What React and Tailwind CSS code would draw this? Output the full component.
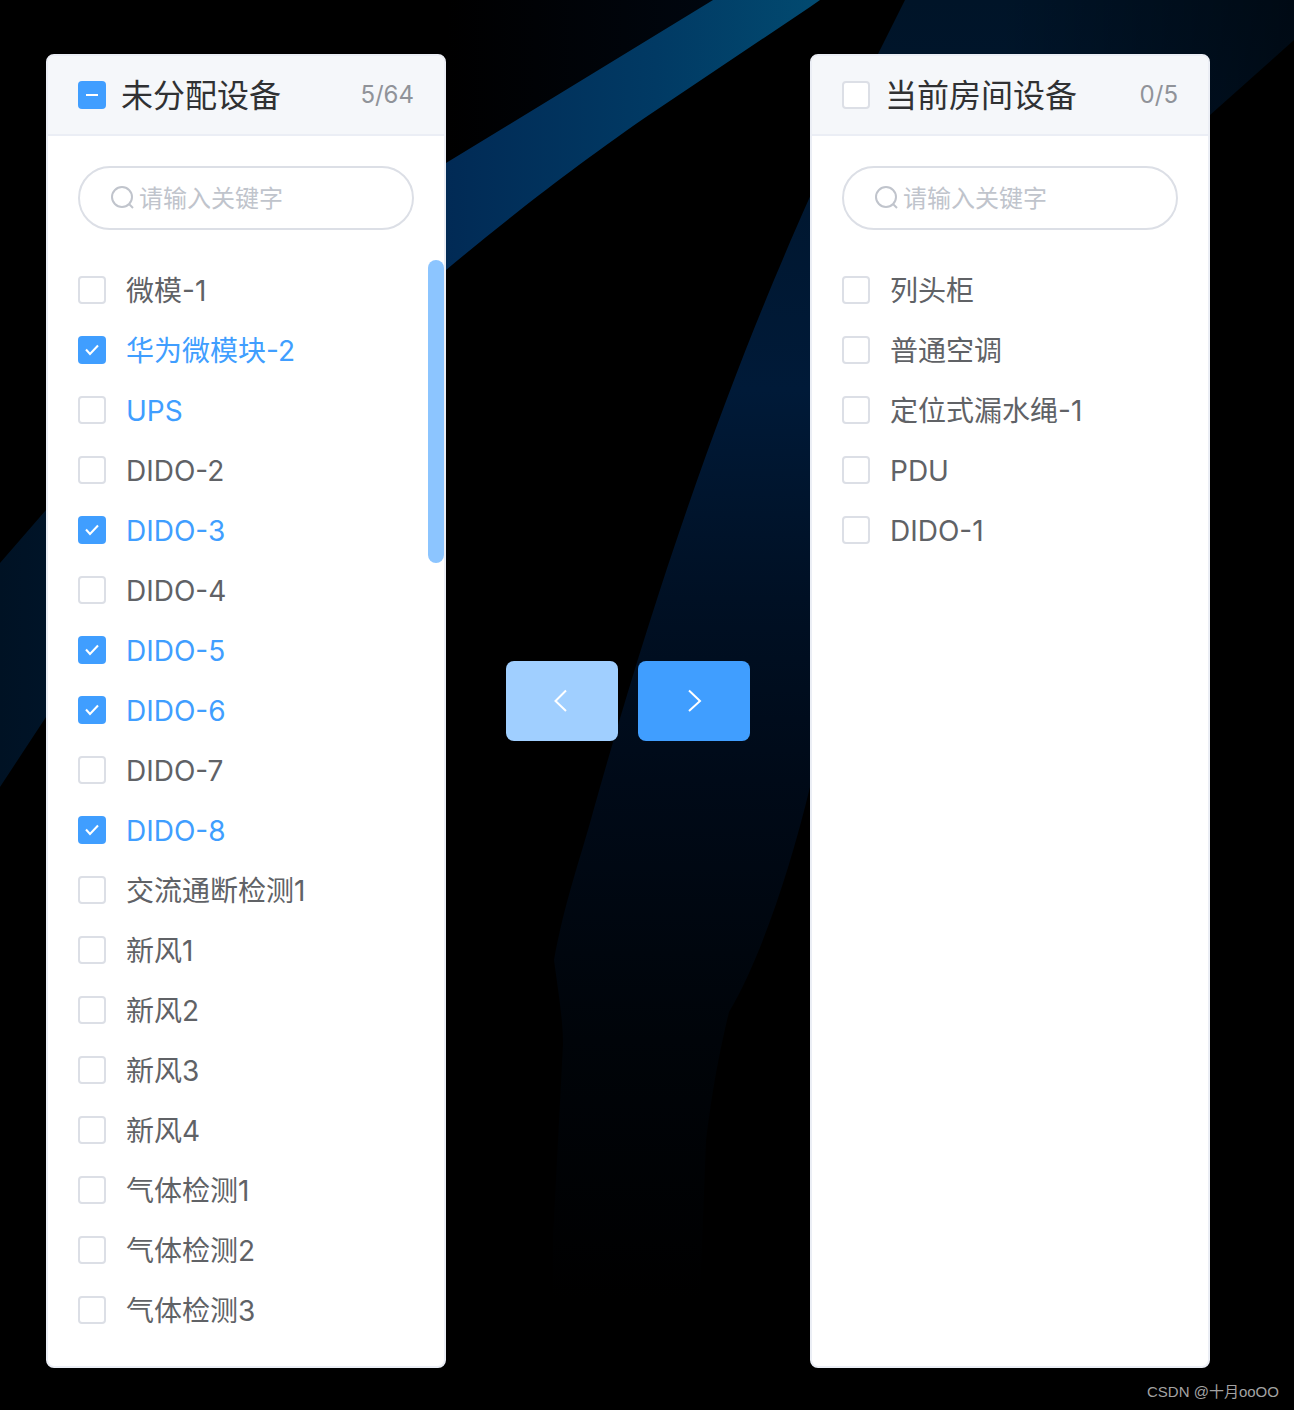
import React from 'react';

const leftItems = [
  { label: '微模-1' },
  { label: '华为微模块-2', checked: true },
  { label: 'UPS', active: true },
  { label: 'DIDO-2' },
  { label: 'DIDO-3', checked: true },
  { label: 'DIDO-4' },
  { label: 'DIDO-5', checked: true },
  { label: 'DIDO-6', checked: true },
  { label: 'DIDO-7' },
  { label: 'DIDO-8', checked: true },
  { label: '交流通断检测1' },
  { label: '新风1' },
  { label: '新风2' },
  { label: '新风3' },
  { label: '新风4' },
  { label: '气体检测1' },
  { label: '气体检测2' },
  { label: '气体检测3' },
];

const rightItems = [
  { label: '列头柜' },
  { label: '普通空调' },
  { label: '定位式漏水绳-1' },
  { label: 'PDU' },
  { label: 'DIDO-1' },
];

const Background = () => (
  <svg className="absolute inset-0 w-full h-full" viewBox="0 0 1294 1410" fill="none">
    <defs>
      <linearGradient id="band1" gradientUnits="userSpaceOnUse" x1="0" y1="0" x2="820" y2="0">
        <stop offset="0" stopColor="#001224" />
        <stop offset="0.06" stopColor="#001428" />
        <stop offset="0.54" stopColor="#012a55" />
        <stop offset="0.8" stopColor="#013a64" />
        <stop offset="1" stopColor="#024a70" />
      </linearGradient>
      <linearGradient id="band2" gradientUnits="userSpaceOnUse" x1="0" y1="0" x2="0" y2="1300">
        <stop offset="0" stopColor="#001428" />
        <stop offset="0.3" stopColor="#001a38" />
        <stop offset="0.46" stopColor="#001024" />
        <stop offset="0.6" stopColor="#000a18" />
        <stop offset="0.8" stopColor="#000409" />
        <stop offset="1" stopColor="#000000" />
      </linearGradient>
      <linearGradient id="top" gradientUnits="userSpaceOnUse" x1="446" y1="0" x2="713" y2="0">
        <stop offset="0" stopColor="#000000" />
        <stop offset="1" stopColor="#00060f" />
      </linearGradient>
      <linearGradient id="fade" gradientUnits="userSpaceOnUse" x1="1000" y1="0" x2="1294" y2="0">
        <stop offset="0" stopColor="#000000" stopOpacity="0" />
        <stop offset="1" stopColor="#000000" stopOpacity="0.5" />
      </linearGradient>
    </defs>
    <path d="M446 0 L713 0 L446 163 Z" fill="url(#top)" />
    <path
      d="M713 0 L446 163 C300 260 130 410 46 510 L0 563 L0 787 L46 717 C130 580 300 370 446 270 C500 225 560 177 646 117 L810 7 L820 0 Z"
      fill="url(#band1)"
    />
    <path
      d="M905 0 L1294 0 L1294 40 L1210 115 L810 787 C790 870 760 960 729 1012 C715 1070 710 1110 706 1141 L700 1300 L553 1300 L553 1237 L563 1044 C563 1020 558 990 554 960 C565 900 580 860 593 812 C700 430 800 210 878 54 Z"
      fill="url(#band2)"
    />
    <rect x="1000" y="0" width="294" height="120" fill="url(#fade)" />
  </svg>
);

const Checkbox = ({ checked, indeterminate }) => {
  if (indeterminate) {
    return (
      <span className="w-7 h-7 shrink-0 rounded-[4px] bg-[#409eff] flex items-center justify-center">
        <span className="w-3 h-0.5 bg-white"></span>
      </span>
    );
  }
  if (checked) {
    return (
      <span className="w-7 h-7 shrink-0 rounded-[4px] bg-[#409eff] flex items-center justify-center">
        <svg width="28" height="28" viewBox="0 0 28 28" fill="none">
          <path d="M8 13.5 L12 18 L20 9.5" stroke="white" strokeWidth="2" />
        </svg>
      </span>
    );
  }
  return <span className="w-7 h-7 shrink-0 rounded-[4px] bg-white border-2 border-[#dcdfe6]"></span>;
};

const Panel = ({ title, count, indeterminate, items, scrollbar }) => (
  <div className="relative w-[400px] h-[1314px] shrink-0 bg-white border-2 border-[#ebeef5] rounded-lg overflow-hidden">
    <div className="h-20 bg-[#f5f7fa] border-b-2 border-[#ebeef5] px-[30px] flex items-center">
      <Checkbox indeterminate={indeterminate} />
      <span className="ml-[15px] pt-0.5 text-[32px] text-[#303133]">{title}</span>
      <span className="ml-auto text-[24px] text-[#909399]">{count}</span>
    </div>
    <div className="p-[30px]">
      <label className="h-16 border-2 border-[#dcdfe6] rounded-full flex items-center pl-[31px] gap-1">
        <svg className="shrink-0" width="24" height="24" viewBox="0 0 24 24" fill="none">
          <circle cx="11" cy="11" r="10" stroke="#c0c4cc" strokeWidth="2" />
          <path d="M18 18 L22 22" stroke="#c0c4cc" strokeWidth="2" />
        </svg>
        <input
          className="w-[200px] pt-0.5 text-[24px] outline-none placeholder:text-[#c0c4cc]"
          placeholder="请输入关键字"
          readOnly
        />
      </label>
    </div>
    <div>
      {items.map((item) => (
        <div key={item.label} className="h-[60px] pl-[30px] flex items-center gap-5">
          <Checkbox checked={item.checked} />
          <span className={`pt-0.5 text-[28px] ${item.checked || item.active ? 'text-[#409eff]' : 'text-[#606266]'}`}>
            {item.label}
          </span>
        </div>
      ))}
    </div>
    {scrollbar && <div className="absolute right-0 top-[204px] w-4 h-[303px] rounded-lg bg-[#8cc5ff]"></div>}
  </div>
);

const App = () => {
  return (
    <div className="relative w-full h-[1410px] bg-black overflow-hidden font-['Inter','Noto_Sans_CJK_SC',sans-serif]">
      <Background />
      <div className="relative flex items-center pl-[46px] pt-[54px]">
        <Panel title="未分配设备" count="5/64" indeterminate items={leftItems} scrollbar />
        <div className="flex gap-5 mx-[60px] mb-5">
          <button className="w-28 h-20 rounded-lg bg-[#a0cfff] flex items-center justify-center">
            <svg width="24" height="24" viewBox="0 0 24 24" fill="none">
              <path d="M16 1.5 L5.5 12 L16 22" stroke="white" strokeWidth="2" />
            </svg>
          </button>
          <button className="w-28 h-20 rounded-lg bg-[#409eff] flex items-center justify-center">
            <svg width="24" height="24" viewBox="0 0 24 24" fill="none">
              <path d="M7 1.5 L18 12 L7 22" stroke="white" strokeWidth="2" />
            </svg>
          </button>
        </div>
        <Panel title="当前房间设备" count="0/5" items={rightItems} />
      </div>
      <div className="absolute left-[1147px] top-[1382px] text-[15px] leading-5 text-[#a3a3a3] whitespace-nowrap font-['Liberation_Sans','Noto_Sans_CJK_SC',sans-serif]">
        CSDN @十月ooOO
      </div>
    </div>
  );
};

export default App;
